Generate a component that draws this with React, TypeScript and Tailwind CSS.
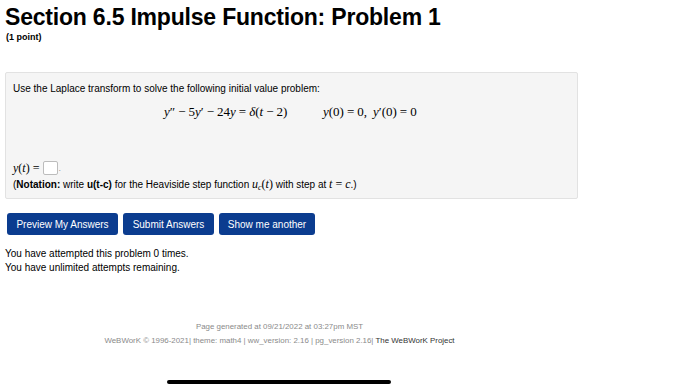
import React from 'react';

const sans = { fontFamily: '"Liberation Sans", Arial, sans-serif' };

function M({ children }: { children: React.ReactNode }) {
  return <span className="font-['Liberation_Serif',serif] italic">{children}</span>;
}

function R({ children }: { children: React.ReactNode }) {
  return <span className="font-['Liberation_Serif',serif] not-italic">{children}</span>;
}

// binary operator with MathJax-like spacing
function Op({ children }: { children: React.ReactNode }) {
  return <span className="mx-[3px] font-['Liberation_Serif',serif] not-italic">{children}</span>;
}

export default function App() {
  return (
    <div
      className="relative w-[700px] h-[388px] overflow-hidden bg-white text-black font-['Liberation_Sans',Arial,sans-serif]"
      style={sans}
    >
      {/* Header */}
      <h1 className="px-[5px] pt-[4px] text-[23px] font-bold leading-[27px] tracking-[-0.2px]">
        Section 6.5 Impulse Function: Problem 1
      </h1>
      <div className="px-[6px] text-[9px] font-bold leading-[12px]">(1 point)</div>

      {/* Problem */}
      <div className="mx-[5px] mt-[29px] h-[127px] w-[573px] rounded-[2px] border border-[#e2e2e2] bg-[#f5f5f5] px-[7px] pt-[9px] text-[10px] leading-[13px]">
        <p>Use the Laplace transform to solve the following initial value problem:</p>
        <div className="mt-[9px] flex text-[13px] leading-[15px]">
          <div className="ml-[151px] w-[159px]">
            <M>y</M>
            <R>″</R>
            <Op>−</Op>
            <R>5</R>
            <M>y</M>
            <R>′</R>
            <Op>−</Op>
            <R>24</R>
            <M>y</M>
            <Op>=</Op>
            <M>δ</M>
            <R>(</R>
            <M>t</M>
            <Op>−</Op>
            <R>2)</R>
          </div>
          <div>
            <M>y</M>
            <R>(0)</R>
            <Op>=</Op>
            <R>0,</R>
            <M>
              <span className="ml-[6px]">y</span>
            </M>
            <R>′(0)</R>
            <Op>=</Op>
            <R>0</R>
          </div>
        </div>
        <div className="mt-[41px] flex items-center text-[12px] leading-[16px]">
          <M>y</M>
          <R>(</R>
          <M>t</M>
          <R>)</R>
          <Op>=</Op>
          <span className="ml-[1px] inline-block h-[14px] w-[15px] rounded-[2px] border border-[#bcbcbc] bg-white" />
          <span className="text-[9px] text-[#999]">.</span>
        </div>
        <p className="mt-[2px]">
          (<b>Notation:</b> write <b>u(t-c)</b> for the Heaviside step function{' '}
          <span className="text-[12px]">
            <M>u</M>
            <sub className="text-[8px]">
              <M>c</M>
            </sub>
            <R>(</R>
            <M>t</M>
            <R>)</R>
          </span>{' '}
          with step at{' '}
          <span className="text-[12px]">
            <M>t</M>
            <Op>=</Op>
            <M>c</M>
          </span>
          .)
        </p>
      </div>

      {/* Buttons */}
      <div className="mt-[14px] flex gap-[5px] px-[7px]">
        <button className="h-[22px] w-[111px] rounded-[3px] bg-[#0b3c8f] text-[10px] text-white">
          Preview My Answers
        </button>
        <button className="h-[22px] w-[91px] rounded-[3px] bg-[#0b3c8f] text-[10px] text-white">
          Submit Answers
        </button>
        <button className="h-[22px] w-[96px] rounded-[3px] bg-[#0b3c8f] text-[10px] text-white">
          Show me another
        </button>
      </div>

      {/* Attempts */}
      <div className="mt-[12px] px-[5px] text-[10px] leading-[14px]">
        <p>You have attempted this problem 0 times.</p>
        <p>You have unlimited attempts remaining.</p>
      </div>

      {/* Footer */}
      <div className="mt-[45px] w-[559px] text-center text-[7.9px] leading-[14px] text-[#8a8a8a]">
        <p>Page generated at 09/21/2022 at 03:27pm MST</p>
        <p>
          WeBWorK © 1996-2021| theme: math4 | ww_version: 2.16 | pg_version 2.16|{' '}
          <span className="text-[#333]">The WeBWorK Project</span>
        </p>
      </div>

      {/* Home indicator */}
      <div className="absolute left-[167px] top-[380px] h-[4px] w-[224px] rounded-full bg-black" />
    </div>
  );
}
